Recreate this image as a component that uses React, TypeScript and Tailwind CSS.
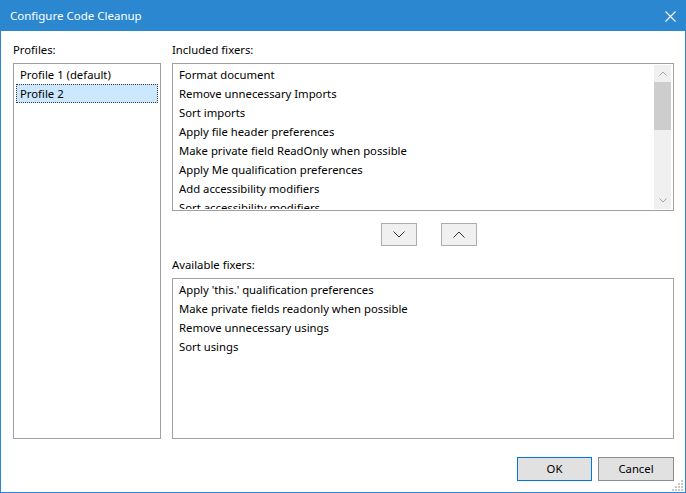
import React from "react";

const included = [
  "Format document",
  "Remove unnecessary Imports",
  "Sort imports",
  "Apply file header preferences",
  "Make private field ReadOnly when possible",
  "Apply Me qualification preferences",
  "Add accessibility modifiers",
  "Sort accessibility modifiers",
];

const available = [
  "Apply 'this.' qualification preferences",
  "Make private fields readonly when possible",
  "Remove unnecessary usings",
  "Sort usings",
];

function Chevron({ up, className }: { up?: boolean; className?: string }) {
  return (
    <svg width="12" height="7" viewBox="0 0 12 7" className={className}>
      <path
        d={up ? "M0.5 6.5 L6 1 L11.5 6.5" : "M0.5 0.5 L6 6 L11.5 0.5"}
        fill="none"
        stroke="currentColor"
        strokeWidth="1"
      />
    </svg>
  );
}

function SmallChevron({ up }: { up?: boolean }) {
  return (
    <svg width="8" height="5" viewBox="0 0 8 5">
      <path
        d={up ? "M0.5 4.5 L4 1 L7.5 4.5" : "M0.5 0.5 L4 4 L7.5 0.5"}
        fill="none"
        stroke="#a3a3a3"
        strokeWidth="1"
      />
    </svg>
  );
}

export default function App() {
  return (
    <div
      className="w-[686px] h-[493px] border border-[#2b88d0] bg-white flex flex-col text-[11.3px] text-black overflow-hidden"
      style={{ fontFamily: '"Segoe UI", "Noto Sans", "Open Sans", sans-serif' }}
    >
      <div className="h-[30px] shrink-0 bg-[#2b88d0] flex items-center justify-between pl-[9px] pr-[9px]">
        <span className="text-white text-[11.5px] leading-none">Configure Code Cleanup</span>
        <svg width="11" height="11" viewBox="0 0 11 11">
          <path d="M0.5 0.5 L10.5 10.5 M10.5 0.5 L0.5 10.5" stroke="white" strokeWidth="1.1" />
        </svg>
      </div>
      <div className="flex-1 flex flex-col pl-[12px] pr-[11px] pt-[11px] pb-[11px]">
        <div className="flex-1 flex gap-[11px]">
          <div className="w-[148px] flex flex-col">
            <div className="h-[16px] leading-[16px]">Profiles:</div>
            <div className="mt-[5px] flex-1 border border-[#a0a0a0] px-[2px] pt-[1px]">
              <div className="h-[19px] leading-[17px] pl-[3px] border border-transparent">Profile 1 (default)</div>
              <div className="h-[19px] leading-[17px] pl-[3px] bg-[#cce8ff] border border-dotted border-[#3c3c3c]">
                Profile 2
              </div>
            </div>
          </div>
          <div className="flex-1 flex flex-col">
            <div className="h-[16px] leading-[16px]">Included fixers:</div>
            <div className="mt-[5px] h-[148px] border border-[#a0a0a0] flex p-[1px] pr-[2px]">
              <div className="flex-1 overflow-hidden pl-[5px]">
                {included.map((t) => (
                  <div key={t} className="h-[19px] leading-[19px] whitespace-nowrap">
                    {t}
                  </div>
                ))}
              </div>
              <div className="w-[17px] bg-[#f0f0f0] flex flex-col">
                <div className="h-[17px] flex items-center justify-center">
                  <SmallChevron up />
                </div>
                <div className="h-[48px] bg-[#cdcdcd]" />
                <div className="flex-1" />
                <div className="h-[17px] flex items-center justify-center">
                  <SmallChevron />
                </div>
              </div>
            </div>
            <div className="mt-[12px] h-[23px] flex gap-[24px] pl-[209px]">
              <div className="w-[36px] h-[23px] bg-[#f0f0f0] border border-[#adadad] flex items-center justify-center text-[#333]">
                <Chevron />
              </div>
              <div className="w-[36px] h-[23px] bg-[#f0f0f0] border border-[#adadad] flex items-center justify-center text-[#333]">
                <Chevron up />
              </div>
            </div>
            <div className="mt-[11px] h-[16px] leading-[16px]">Available fixers:</div>
            <div className="mt-[5px] flex-1 border border-[#a0a0a0] p-[1px] pl-[6px]">
              {available.map((t) => (
                <div key={t} className="h-[19px] leading-[19px] whitespace-nowrap">
                  {t}
                </div>
              ))}
            </div>
          </div>
        </div>
        <div className="mt-[18px] h-[24px] flex justify-end gap-[6px]">
          <div className="w-[75px] h-[24px] bg-[#e1e1e1] border border-[#0078d7] flex items-center justify-center">
            OK
          </div>
          <div className="w-[76px] h-[24px] bg-[#e1e1e1] border border-[#8c8c8c] flex items-center justify-center">
            Cancel
          </div>
        </div>
      </div>
      <div className="relative">
        <svg
          width="12"
          height="12"
          viewBox="0 0 12 12"
          className="absolute right-[1px] bottom-[1px]"
        >
          {[
            [10, 2],
            [10, 5],
            [7, 5],
            [10, 8],
            [7, 8],
            [4, 8],
            [10, 11],
            [7, 11],
            [4, 11],
            [1, 11],
          ].map(([x, y], i) => (
            <rect key={i} x={x - 1} y={y - 1} width="2" height="2" fill="#c8c8c8" />
          ))}
        </svg>
      </div>
    </div>
  );
}
